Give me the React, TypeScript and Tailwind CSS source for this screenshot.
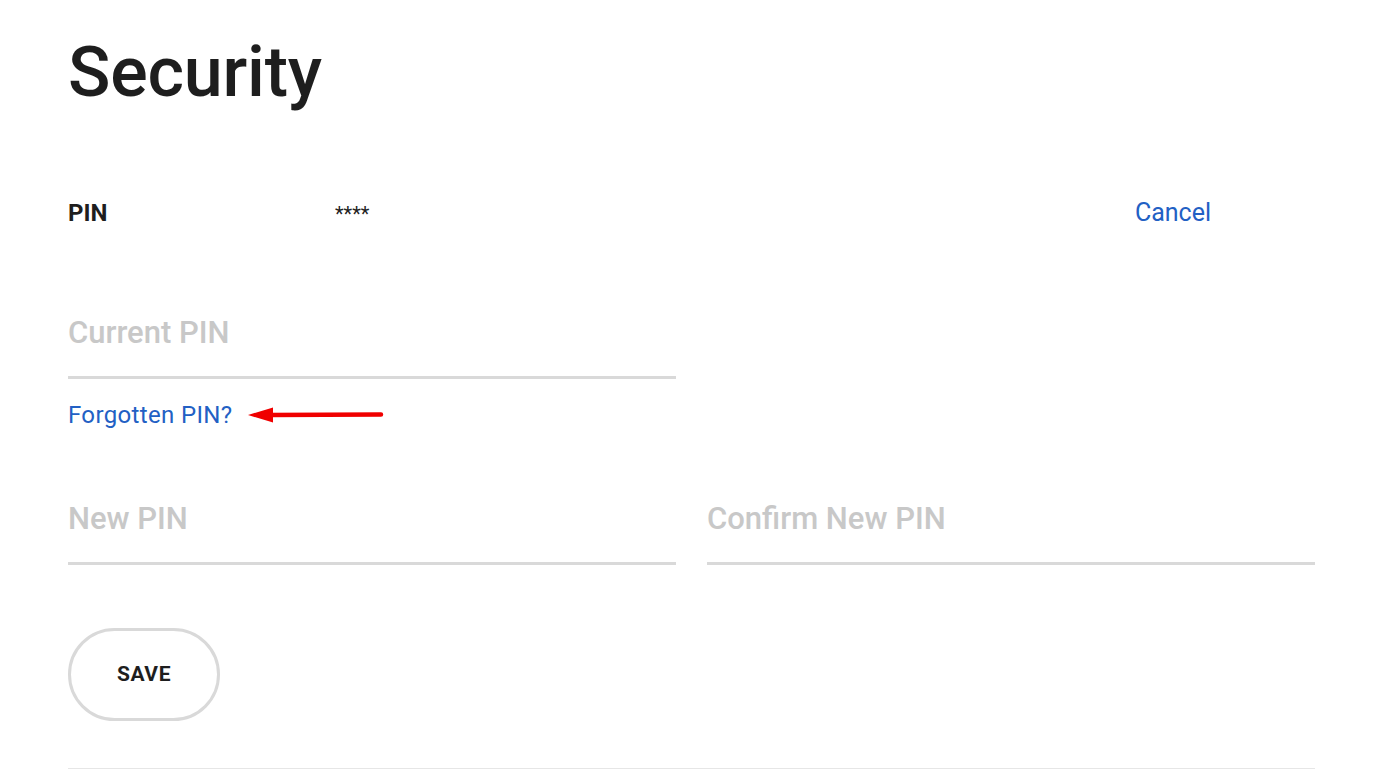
import React from "react";

export default function App() {
  return (
    <div className="min-h-screen bg-white" style={{ fontFamily: "Roboto, 'Liberation Sans', sans-serif" }}>
      <div className="ml-[68px] w-[1247px]">
        <h1 className="pt-[37px] text-[70px] leading-[70px] font-medium tracking-[-0.2px] text-[#1e1e1e]">Security</h1>
        <div className="mt-[94px] flex items-baseline leading-[24px]">
          <div className="w-[267px] text-[24px] font-bold text-[#1e1e1e]">PIN</div>
          <div className="text-[20px] text-[#222222]">****</div>
          <a className="ml-auto mr-[104px] text-[25px] text-[#2260c4]">Cancel</a>
        </div>
        <div className="mt-[91px] w-[608px] border-b-[3px] border-[#d9d9d9] pb-[28px]">
          <div className="text-[31px] leading-[31px] font-medium text-[#c8c8c8] tracking-[0px]">Current PIN</div>
        </div>
        <div className="mt-[24px] flex items-center">
          <a className="text-[24px] leading-[24px] tracking-[0.35px] text-[#2260c4]">Forgotten PIN?</a>
          <svg width="140" height="16" viewBox="0 0 140 16" className="ml-[16px]">
            <line x1="22" y1="8" x2="133" y2="7.5" stroke="#f00000" strokeWidth="4.5" strokeLinecap="round" />
            <polygon points="0,8 25,0.5 25,15.5" fill="#f00000" />
          </svg>
        </div>
        <div className="mt-[76px] grid grid-cols-2 gap-[31px]">
          <div className="border-b-[3px] border-[#d9d9d9] pb-[28px]">
            <div className="text-[31px] leading-[31px] font-medium text-[#c8c8c8] tracking-[0px]">New PIN</div>
          </div>
          <div className="border-b-[3px] border-[#d9d9d9] pb-[28px]">
            <div className="text-[31px] leading-[31px] font-medium text-[#c8c8c8] tracking-[0px]">Confirm New PIN</div>
          </div>
        </div>
        <button className="mt-[63px] flex h-[93px] w-[152px] items-center justify-center rounded-full border-[3px] border-[#d9d9d9] text-[21px] font-bold tracking-[0.6px] text-[#1e1e1e]">
          SAVE
        </button>
        <div className="mt-[47px] border-t border-[#e6e6e6]" />
      </div>
    </div>
  );
}
